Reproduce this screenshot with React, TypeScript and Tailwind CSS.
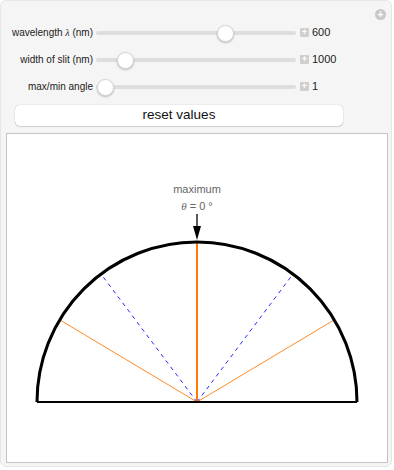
import React from "react";

function Slider({ label, pos, value }: { label: React.ReactNode; pos: number; value: string }) {
  return (
    <div className="flex items-center h-[27px]">
      <div className="w-[92px] text-right text-[10px] text-[#222] pr-[3px] whitespace-nowrap">{label}</div>
      <div className="relative w-[200px] h-[16px] flex items-center">
        <div className="w-full h-[4px] rounded-full bg-[#dedede]" />
        <div
          className="absolute top-0 w-[17px] h-[17px] rounded-full bg-white border border-[#d6d6d6] shadow-[0_1px_2px_rgba(0,0,0,0.25)]"
          style={{ left: pos }}
        />
      </div>
      <div className="ml-[4px] w-[9px] h-[9px] bg-[#cfcfcf] rounded-[1px] flex items-center justify-center">
        <span className="text-white text-[9px] leading-none font-bold">+</span>
      </div>
      <div className="ml-[3px] text-[11px] text-[#222]">{value}</div>
    </div>
  );
}

export default function App() {
  const cx = 190;
  const cy = 268;
  const r = 160;
  const minA = Math.asin(0.6);
  const maxA = Math.asin(0.858);
  const pt = (a: number, s: number) => [cx + s * r * Math.sin(a), cy - r * Math.cos(a)];
  const [bx1, by1] = pt(minA, -1);
  const [bx2, by2] = pt(minA, 1);
  const [ox1, oy1] = pt(maxA, -1);
  const [ox2, oy2] = pt(maxA, 1);
  return (
    <div className="w-[394px] h-[470px] bg-white" style={{ fontFamily: '"Liberation Sans", Arial, sans-serif' }}>
      <div className="w-[392px] h-[467px] bg-[#f5f5f5] border border-[#e6e6e6] rounded-[6px] relative flex flex-col">
        <div className="absolute right-[5px] top-[8px] w-[11px] h-[11px] rounded-full bg-[#c8c8c8] flex items-center justify-center">
          <span className="text-white text-[10px] leading-none font-bold">+</span>
        </div>
        <div className="pt-[18px] pl-[3px] flex flex-col">
          <Slider label={<span>wavelength <span style={{ fontFamily: '"Liberation Serif", serif', fontStyle: "italic" }}>λ</span> (nm)</span>} pos={121} value="600" />
          <Slider label="width of slit (nm)" pos={21} value="1000" />
          <Slider label="max/min angle" pos={1} value="1" />
        </div>
        <div className="ml-[14px] mt-[5px] w-[328px] h-[21px] bg-white rounded-[5px] shadow-[0_0_1px_rgba(0,0,0,0.35),0_1px_1px_rgba(0,0,0,0.12)] flex items-center justify-center text-[13.5px] text-[#111]">
          reset values
        </div>
        <div className="ml-[5px] mt-[7px] w-[382px] h-[330px] bg-white border border-[#c4c4c4] relative">
          <svg width="380" height="328" className="absolute left-0 top-0">
            <line x1={cx} y1={cy} x2={ox1} y2={oy1} stroke="#ff8c26" strokeWidth="1" />
            <line x1={cx} y1={cy} x2={ox2} y2={oy2} stroke="#ff8c26" strokeWidth="1" />
            <line x1={cx} y1={cy} x2={bx1} y2={by1} stroke="#2a2aff" strokeWidth="1" strokeDasharray="4 4" />
            <line x1={cx} y1={cy} x2={bx2} y2={by2} stroke="#2a2aff" strokeWidth="1" strokeDasharray="4 4" />
            <line x1={cx} y1={cy} x2={cx} y2={cy - r} stroke="#ff7a00" strokeWidth="2" />
            <path d={`M ${cx - r} ${cy} A ${r} ${r} 0 0 1 ${cx + r} ${cy}`} fill="none" stroke="#000" strokeWidth="3" />
            <line x1={cx - r} y1={cy} x2={cx + r} y2={cy} stroke="#000" strokeWidth="2" />
            <line x1={cx} y1={80} x2={cx} y2={96} stroke="#000" strokeWidth="1.3" />
            <path d={`M ${cx - 4} ${92} L ${cx + 4} ${92} L ${cx} ${106} Z`} fill="#000" />
            <text x={cx} y={59} textAnchor="middle" fontSize="11" fill="#666" fontFamily='"Liberation Sans", Arial, sans-serif'>maximum</text>
            <text x={cx} y={76} textAnchor="middle" fontSize="11" fill="#666" fontFamily='"Liberation Sans", Arial, sans-serif'>
              <tspan fontStyle="italic" fontFamily='"Liberation Serif", serif'>θ</tspan> = 0 °
            </text>
          </svg>
        </div>
      </div>
    </div>
  );
}
